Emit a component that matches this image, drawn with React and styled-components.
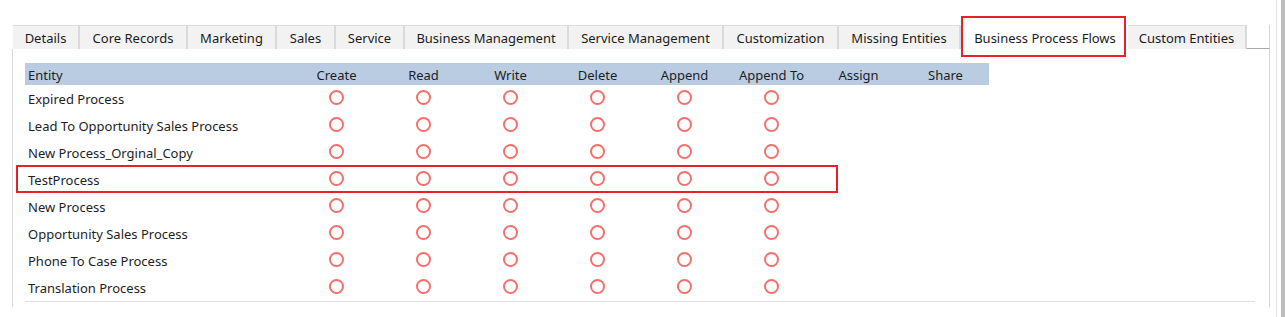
import React from "react";
import styled, { createGlobalStyle } from "styled-components";

const GlobalStyle = createGlobalStyle`
  html, body {
    margin: 0;
    padding: 0;
    background: #ffffff;
  }
  body {
    font-family: "Noto Sans", "Open Sans", sans-serif;
    font-size: 13px;
    color: #1e1e1e;
  }
`;

const Page = styled.div`
  display: flex;
  width: 1285px;
  height: 317px;
  overflow: hidden;
`;

const Main = styled.div`
  width: 1276px;
  padding: 25px 6px 0 12px;
  box-sizing: border-box;
`;

const ScrollEdge = styled.div`
  flex: 1;
  border-left: 1px solid #e2e2e2;
  display: flex;
  justify-content: flex-end;
  span {
    width: 4px;
    background: #bcbcbc;
  }
`;

const TabStrip = styled.div`
  display: flex;
  height: 24px;
  padding-left: 1px;
`;

const Tab = styled.div`
  position: relative;
  width: ${(p) => p.w}px;
  box-sizing: border-box;
  display: flex;
  align-items: center;
  justify-content: center;
  white-space: nowrap;
  background: ${(p) => (p.active ? "#ffffff" : "#f2f2f2")};
  border-top: 1px solid ${(p) => (p.active ? "#ffffff" : "#dcdcdc")};
  border-right: 2px solid ${(p) => (p.active ? "#ffffff" : "#dadada")};
  color: #1c1c1c;
  padding-top: 1px;
  padding-left: ${(p) => (p.active ? "3px" : "0")};

  &::after {
    content: "";
    display: ${(p) => (p.active ? "block" : "none")};
    position: absolute;
    top: -10px;
    bottom: -8px;
    left: 0;
    right: 0;
    border: 2px solid #e8202b;
  }
`;

const TabFill = styled.div`
  flex: 1;
  border-bottom: 1px solid #a8a8a8;
  border-right: 1px solid #d4d4d4;
`;

const Panel = styled.div`
  height: 244px;
  border-left: 1px solid #d9d9d9;
  border-right: 1px solid #d4d4d4;
  padding: 14px 14px 0 12px;
`;

const Grid = styled.div`
  display: grid;
  grid-template-columns: 268px repeat(8, 87px);
  width: 964px;
`;

const HeadRow = styled(Grid)`
  height: 22px;
  background: #b9cce2;
  align-items: center;
`;

const HeadCell = styled.div`
  text-align: ${(p) => (p.first ? "left" : "center")};
  padding-left: ${(p) => (p.first ? "3px" : "0")};
  white-space: nowrap;
  line-height: 22px;
  padding-top: 1px;
`;

const Row = styled(Grid)`
  position: relative;
  height: 27px;
  align-items: center;

  &::after {
    content: "";
    display: ${(p) => (p.marked ? "block" : "none")};
    position: absolute;
    top: -1px;
    left: -9px;
    width: 822px;
    height: 28px;
    box-sizing: border-box;
    border: 2px solid #e8202b;
  }
`;

const NameCell = styled.div`
  padding-left: 3px;
  white-space: nowrap;
`;

const CircleCell = styled.div`
  display: flex;
  justify-content: center;
  padding-bottom: 2px;
`;

const Circle = styled.span`
  width: 15px;
  height: 15px;
  box-sizing: border-box;
  border: 2px solid #f4706c;
  border-radius: 50%;
`;

const Divider = styled.div`
  height: 1px;
  background: #dedede;
`;

const tabs = [
  ["Details", 67],
  ["Core Records", 108],
  ["Marketing", 89],
  ["Sales", 59],
  ["Service", 69],
  ["Business Management", 164],
  ["Service Management", 155],
  ["Customization", 115],
  ["Missing Entities", 122],
  ["Business Process Flows", 167, true],
  ["Custom Entities", 119],
];

const columns = ["Create", "Read", "Write", "Delete", "Append", "Append To", "Assign", "Share"];

const entities = [
  "Expired Process",
  "Lead To Opportunity Sales Process",
  "New Process_Orginal_Copy",
  "TestProcess",
  "New Process",
  "Opportunity Sales Process",
  "Phone To Case Process",
  "Translation Process",
];

export default function App() {
  return (
    <>
      <GlobalStyle />
      <Page>
        <Main>
          <TabStrip>
            {tabs.map(([label, w, active]) => (
              <Tab key={label} w={w} active={active}>
                {label}
              </Tab>
            ))}
            <TabFill />
          </TabStrip>
          <Panel>
            <HeadRow>
              <HeadCell first>Entity</HeadCell>
              {columns.map((c) => (
                <HeadCell key={c}>{c}</HeadCell>
              ))}
            </HeadRow>
            {entities.map((name) => (
              <Row key={name} marked={name === "TestProcess"}>
                <NameCell>{name}</NameCell>
                {columns.slice(0, 6).map((c) => (
                  <CircleCell key={c}>
                    <Circle />
                  </CircleCell>
                ))}
              </Row>
            ))}
            <Divider />
          </Panel>
        </Main>
        <ScrollEdge>
          <span />
        </ScrollEdge>
      </Page>
    </>
  );
}
